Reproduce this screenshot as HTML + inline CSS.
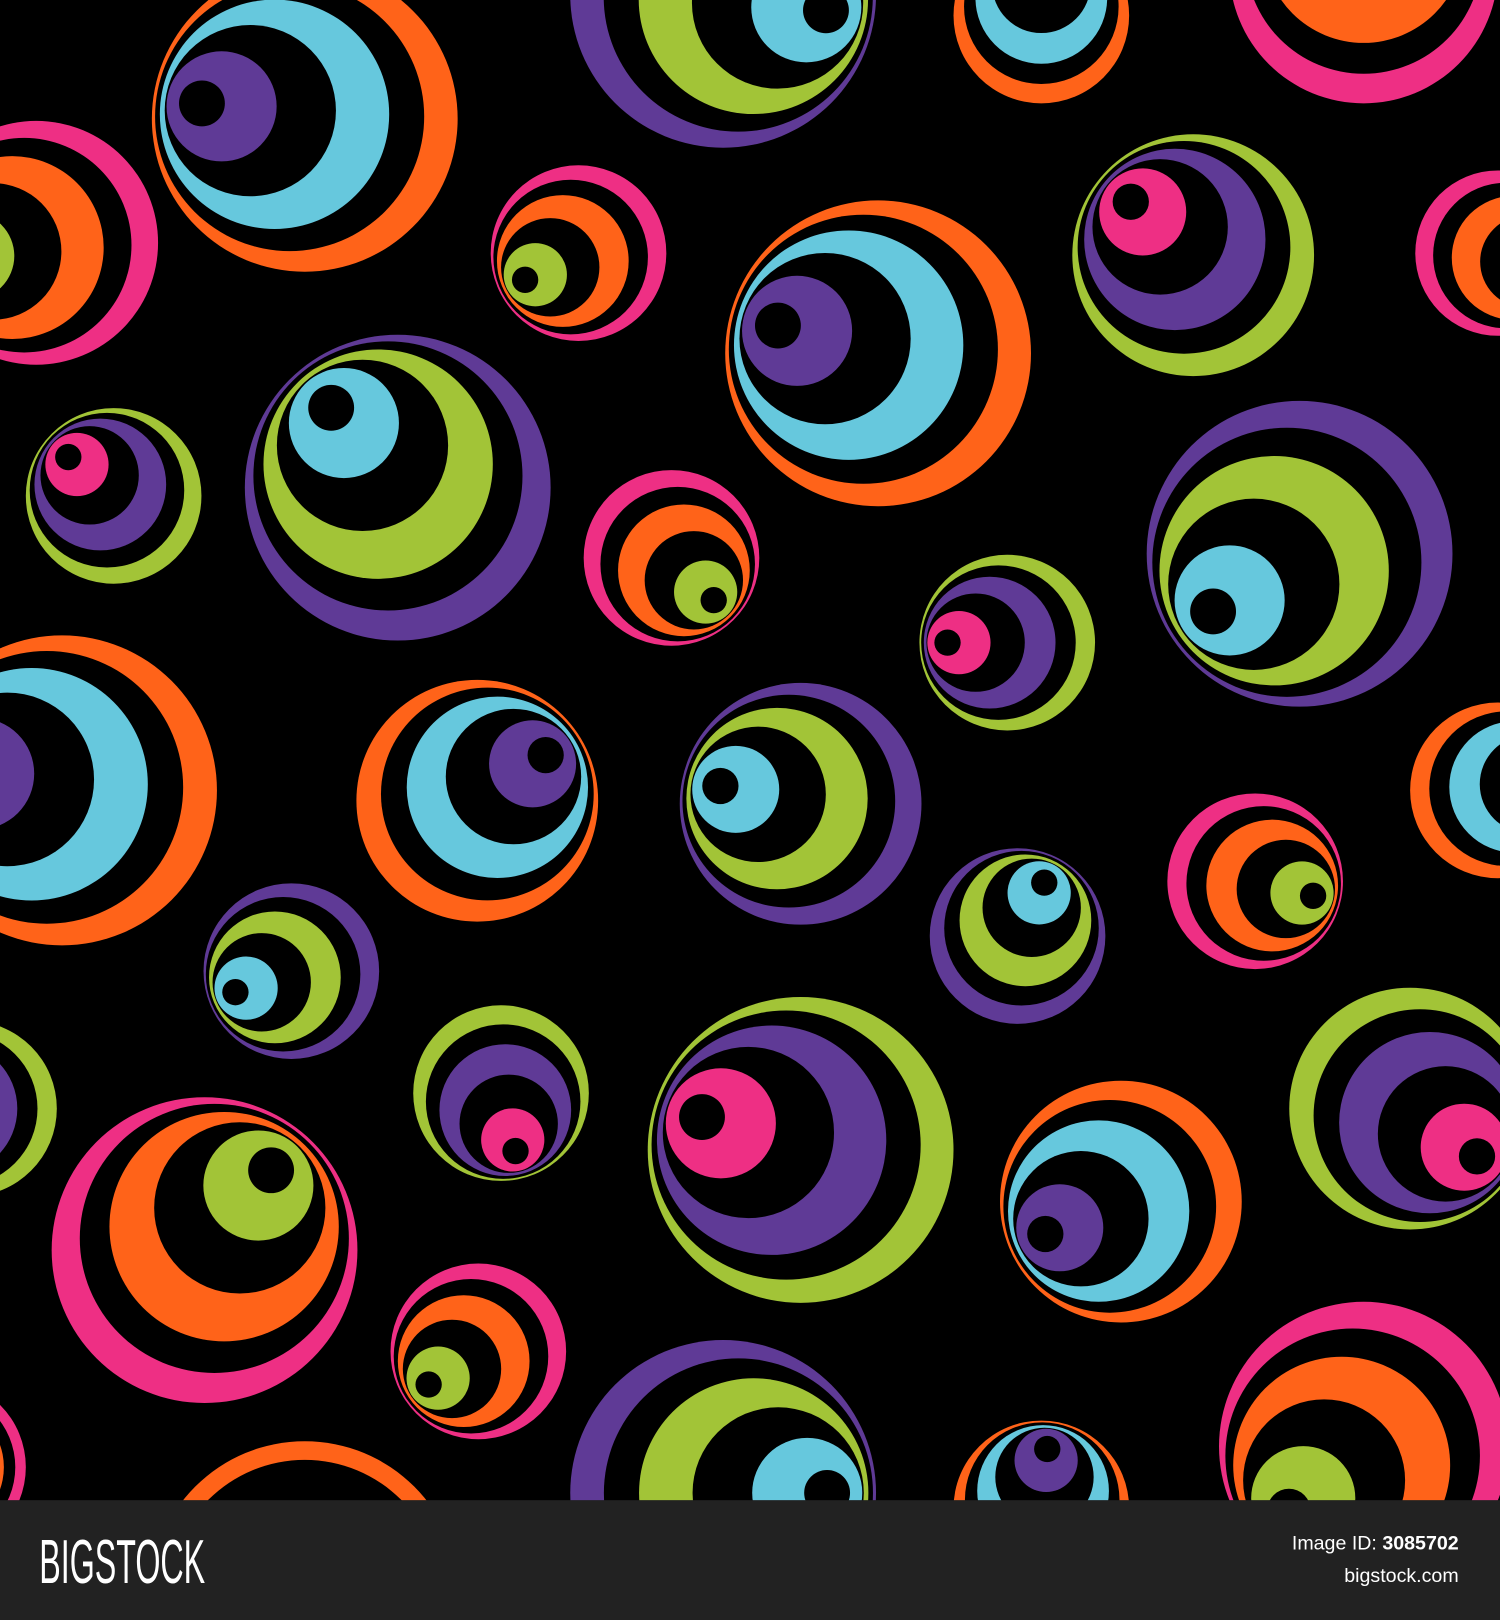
<!DOCTYPE html>
<html><head><meta charset="utf-8"><style>
html,body{margin:0;padding:0;background:#000;width:1500px;height:1620px;overflow:hidden}
svg{display:block}
</style></head><body>
<svg id="s" width="1500" height="1620" viewBox="0 0 1452 1568" xmlns="http://www.w3.org/2000/svg" preserveAspectRatio="none">
<rect width="1452" height="1568" fill="#000"/>
<g id="m"></g>
<rect x="0" y="1452" width="1452" height="116" fill="#222"/>
<text x="38" y="1532" font-family="Liberation Sans, sans-serif" font-size="60" fill="#fff" transform="translate(38 0) scale(0.52 1) translate(-38 0)">BIGSTOCK</text>
<text x="1412" y="1500" text-anchor="end" font-family="Liberation Sans, sans-serif" font-size="19" fill="#fff">Image ID: <tspan font-weight="bold">3085702</tspan></text>
<text x="1412" y="1531" text-anchor="end" font-family="Liberation Sans, sans-serif" font-size="19" fill="#fff">bigstock.com</text>
</svg>
<script>
var O="#ff6319",C="#66c8dd",P="#5f3a96",G="#a2c437",K="#ee2f84",B="#000";
var L=[[1,0],[0.88,0.1],[0.75,0.2],[0.56,0.36],[0.36,0.55],[0.15,0.68]];
var M=[
[295,115,148,O,C,P,-1,-0.15],[700,-5,148,P,G,C,1,0.15],[1008,15,85,O,C,P,0,-1],[1320,-30,130,K,O,G,0,-1],
[35,235,118,K,O,G,-1,0.2],[560,245,85,K,O,G,-0.8,0.4],[850,342,148,O,C,P,-0.9,-0.25],[1155,247,117,G,P,K,-0.7,-0.6],
[1450,245,80,K,O,G,1,0.3],[110,480,85,G,P,K,-0.7,-0.6],[385,472,148,P,G,C,-0.5,-0.6],[650,540,85,K,O,G,0.5,0.5],
[975,622,85,G,P,K,-1,0],[1258,536,148,P,G,C,-0.6,0.4],[60,765,150,O,C,P,-1,-0.2],[462,775,117,O,C,P,0.6,-0.4],
[775,778,117,P,G,C,-0.9,-0.2],[1450,765,85,O,C,P,1,-0.2],[282,940,85,P,G,C,-0.8,0.3],[985,906,85,P,G,C,0.4,-0.8],
[1215,853,85,K,O,G,0.8,0.2],[485,1058,85,G,P,K,0.2,0.8],[775,1113,148,G,P,K,-0.9,-0.3],[1085,1163,117,O,C,P,-0.7,0.3],
[1365,1073,117,G,P,K,0.7,0.5],[-30,1073,85,G,P,K,-1,0],[198,1210,148,K,O,G,0.5,-0.6],[463,1308,85,K,O,G,-0.6,0.4],
[700,1445,148,P,G,C,0.7,0],[1008,1460,85,O,C,P,0.1,-1],[1320,1400,140,K,O,G,-0.7,0.6],[295,1545,150,O,B,B,0,0],[-60,1420,85,K,O,G,0,0]
];
var h="";
M.forEach(function(m){var n=Math.hypot(m[6],m[7])||1,dx=m[6]/n,dy=m[7]/n,R=m[2],cols=[m[3],B,m[4],B,m[5],B];
L.forEach(function(l,i){h+='<circle cx="'+(m[0]+dx*l[1]*R)+'" cy="'+(m[1]+dy*l[1]*R)+'" r="'+(l[0]*R)+'" fill="'+cols[i]+'"/>';});});
document.getElementById("m").innerHTML=h;
</script>
</body></html>
